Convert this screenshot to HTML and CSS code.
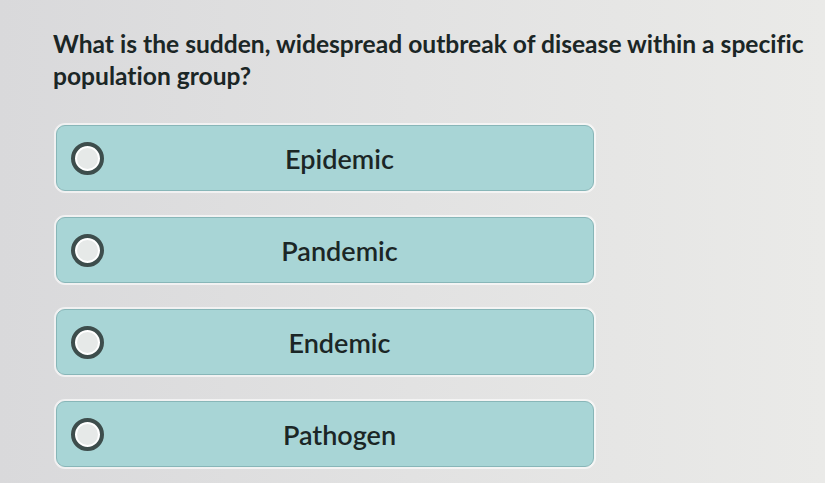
FILE: index.html
```html
<!DOCTYPE html>
<html lang="en">
<head>
  <meta charset="UTF-8">
  <meta name="viewport" content="width=device-width, initial-scale=1.0">
  <title>Quiz</title>
  <link rel="stylesheet" href="styles.css">
</head>
<body>
  <div class="quiz">
    <h2 class="question">What is the sudden, widespread outbreak of disease within a specific population group?</h2>
    <div class="options">
      <label class="option"><span class="radio"></span><span class="text">Epidemic</span></label>
      <label class="option"><span class="radio"></span><span class="text">Pandemic</span></label>
      <label class="option"><span class="radio"></span><span class="text">Endemic</span></label>
      <label class="option"><span class="radio"></span><span class="text">Pathogen</span></label>
    </div>
  </div>
</body>
</html>
```

FILE: styles.css
```css
    html, body {
      margin: 0;
      height: 100%;
    }

    body {
      font-family: Lato, "Open Sans", sans-serif;
      font-variant-ligatures: none;
      background: linear-gradient(90deg, #d9d9db 0%, #e2e2e2 50%, #eaeae8 100%);
      color: #1b2626;
      overflow: hidden;
    }

    .quiz {
      padding: 28px 0 0 53px;
    }

    .question {
      margin: 0;
      width: 770px;
      font-size: 24.6px;
      font-weight: 700;
      line-height: 32px;
    }

    .options {
      margin-top: 33px;
      width: 538px;
      display: flex;
      flex-direction: column;
      gap: 26px;
      margin-left: 3px;
    }

    .option {
      display: flex;
      align-items: center;
      height: 64px;
      background-color: #a8d5d6;
      border: 1px solid #88b6b8;
      border-radius: 9px;
      box-shadow: 0 0 0 2px rgba(255, 255, 255, 0.6);
      cursor: pointer;
    }

    .radio {
      box-sizing: border-box;
      width: 33px;
      height: 33px;
      margin-left: 14px;
      border-radius: 50%;
      border: 4px solid #3d4d4c;
      background-color: #e6e9e8;
      box-shadow: inset 0 0 0 2px #ffffff;
    }

    .text {
      flex: 1;
      text-align: center;
      padding-right: 18px;
      font-size: 27px;
      font-weight: 600;
    }
```
